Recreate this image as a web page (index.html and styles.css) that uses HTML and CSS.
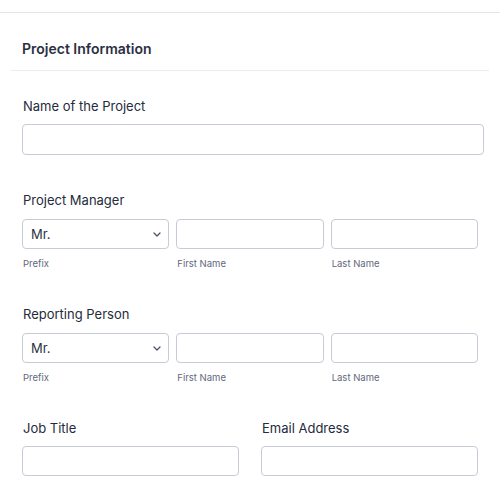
FILE: index.html
```html
<!DOCTYPE html>
<html lang="en">
<head>
    <meta charset="UTF-8">
    <meta name="viewport" content="width=device-width, initial-scale=1.0">
    <title>Project Information</title>
    <link rel="stylesheet" href="styles.css">
</head>
<body>

    <div class="form-wrapper">
        <div class="form-header">
            <h2>Project Information</h2>
        </div>

        <div class="field field-first">
            <label for="projectName">Name of the Project</label>
            <input type="text" id="projectName" class="input-wide">
        </div>

        <div class="field field-manager">
            <label>Project Manager</label>
            <div class="name-row">
                <div class="name-col">
                    <div class="select-box">
                        <select id="managerPrefix">
                            <option>Mr.</option>
                            <option>Mrs.</option>
                            <option>Ms.</option>
                        </select>
                        <svg class="chevron" width="8" height="5" viewBox="0 0 8 5"><path d="M1 1l3 3 3-3" fill="none" stroke="#4b5366" stroke-width="1.3" stroke-linecap="round" stroke-linejoin="round"/></svg>
                    </div>
                    <span class="sublabel">Prefix</span>
                </div>
                <div class="name-col">
                    <input type="text" id="managerFirst">
                    <span class="sublabel">First Name</span>
                </div>
                <div class="name-col">
                    <input type="text" id="managerLast">
                    <span class="sublabel">Last Name</span>
                </div>
            </div>
        </div>

        <div class="field field-next">
            <label>Reporting Person</label>
            <div class="name-row">
                <div class="name-col">
                    <div class="select-box">
                        <select id="reportPrefix">
                            <option>Mr.</option>
                            <option>Mrs.</option>
                            <option>Ms.</option>
                        </select>
                        <svg class="chevron" width="8" height="5" viewBox="0 0 8 5"><path d="M1 1l3 3 3-3" fill="none" stroke="#4b5366" stroke-width="1.3" stroke-linecap="round" stroke-linejoin="round"/></svg>
                    </div>
                    <span class="sublabel">Prefix</span>
                </div>
                <div class="name-col">
                    <input type="text" id="reportFirst">
                    <span class="sublabel">First Name</span>
                </div>
                <div class="name-col">
                    <input type="text" id="reportLast">
                    <span class="sublabel">Last Name</span>
                </div>
            </div>
        </div>

        <div class="field field-next two-col">
            <div class="half">
                <label for="jobTitle">Job Title</label>
                <input type="text" id="jobTitle">
            </div>
            <div class="half">
                <label for="email">Email Address</label>
                <input type="email" id="email">
            </div>
        </div>
    </div>

</body>
</html>
```

FILE: styles.css
```css
body {
    font-family: Inter, 'Noto Sans', sans-serif;
    margin: 0;
    padding: 12px 0 0;
    background-color: #fff;
    color: #2c3345;
}

.form-wrapper {
    border-top: 1px solid #e3e5eb;
}

.form-header {
    margin: 0 11px;
    padding: 26px 11px 11px;
    border-bottom: 1px solid #eaecf0;
}

.form-header h2 {
    margin: 0;
    font-size: 14px;
    line-height: 20px;
    font-weight: 600;
    color: #2a3042;
}

.field {
    padding: 0 22px;
}

.field-first {
    margin-top: 26px;
    padding-right: 16px;
}

.field-manager {
    margin-top: 36px;
}

.field-next {
    margin-top: 34px;
}

.field label {
    display: block;
    font-size: 13px;
    line-height: 18px;
    font-weight: 400;
    margin: 0 0 9px 1px;
    color: #252b3b;
}

.field input,
.field select {
    display: block;
    width: 100%;
    height: 30px;
    padding: 0 8px;
    border: 1px solid #c6cbd6;
    border-radius: 4px;
    font-family: inherit;
    font-size: 13px;
    color: #2c3345;
    background: #fff;
    box-sizing: border-box;
}

.field .input-wide {
    height: 31px;
}

.field-manager label,
.field-next label {
    margin-bottom: 10px;
}

.name-row {
    display: grid;
    grid-template-columns: 1fr 1fr 1fr;
    gap: 7px;
}

.select-box {
    position: relative;
}

.select-box select {
    appearance: none;
    -webkit-appearance: none;
    padding-left: 8px;
}

.chevron {
    position: absolute;
    right: 8px;
    top: 13px;
    pointer-events: none;
}

.sublabel {
    display: block;
    margin: 8px 0 0 1px;
    font-size: 9.5px;
    line-height: 14px;
    color: #5f6880;
}

.two-col {
    display: grid;
    grid-template-columns: 1fr 1fr;
    gap: 22px;
}

.two-col label {
    margin-bottom: 9px;
}
```
